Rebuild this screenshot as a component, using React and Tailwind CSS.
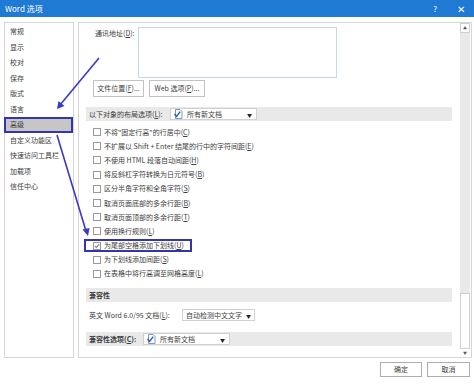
import React from "react";

const U = ({ c }) => <span className="underline">{c}</span>;

function Check({ checked }) {
  return (
    <span className="w-[8px] h-[8px] border border-[#9a9a9a] bg-white flex items-center justify-center shrink-0">
      {checked && (
        <svg width="6" height="6" viewBox="0 0 6 6">
          <path d="M0.8 3 L2.4 4.6 L5.2 1.2" stroke="#8a8a8a" strokeWidth="1.1" fill="none" />
        </svg>
      )}
    </span>
  );
}

function DocIcon() {
  return (
    <svg width="9" height="10" viewBox="0 0 9 10" className="shrink-0">
      <path d="M1.5 0.5 H6 L8 2.5 V9.5 H1.5 Z" fill="#fff" stroke="#5a7fb5" strokeWidth="0.8" />
      <path d="M0.5 5 L2.6 7.4 L6.2 2.6" stroke="#2a5aa8" strokeWidth="1.4" fill="none" />
    </svg>
  );
}

function Arrow() {
  return <span className="ml-auto text-[5px] leading-none text-[#222]">▼</span>;
}

function Dropdown({ w, icon, text }) {
  return (
    <div className={`${w} h-[12px] bg-white border border-[#d0d0d0] flex items-center pl-[3px] pr-[4px] gap-[4px] whitespace-nowrap`}>
      {icon && <DocIcon />}
      <span className="whitespace-nowrap">{text}</span>
      <Arrow />
    </div>
  );
}

function Row({ children, checked }) {
  return (
    <div className="h-[14.2px] flex items-center pl-[7px]">
      <Check checked={checked} />
      <span className="ml-[3px] whitespace-nowrap">{children}</span>
    </div>
  );
}

export default function App() {
  const left = ["常规", "显示", "校对", "保存", "版式", "语言", "高级", "自定义功能区", "快速访问工具栏", "加载项", "信任中心"];
  return (
    <div className="w-[474px] h-[384px] relative bg-white overflow-hidden text-[7px] leading-none text-[#404040] font-['Noto_Sans_CJK_SC','Noto_Sans',sans-serif]">
      {/* title bar */}
      <div className="h-[17px] bg-[#1f7ad3] text-white flex items-center pl-[5px] pr-[9px]">
        <span className="text-[8px]">Word 选项</span>
        <span className="ml-auto text-[8px] mr-[20px]">?</span>
        <span className="text-[10px]">✕</span>
      </div>

      <div className="flex gap-[4px] pl-[4px] pr-[2px] pt-[5px] h-[341px]">
        {/* left nav */}
        <div className="w-[70px] h-full border border-[#d6d6d6] pt-[1px]">
          {left.map((t) =>
            t === "高级" ? (
              <div key={t} className="h-[15.5px] flex items-center">
                <div className="-ml-[1px] w-[71px] h-[16px] bg-[#c6c6c6] border-2 border-[#3434ae] flex items-center pl-[4px]">{t}</div>
              </div>
            ) : (
              <div key={t} className="h-[15.5px] flex items-center pl-[5px]">{t}</div>
            )
          )}
        </div>

        {/* right panel */}
        <div className="flex-1 h-full border border-[#d6d6d6] flex">
          <div className="flex-1 pl-[7px] pr-[8px] pt-[4px] flex flex-col">
            <div className="flex pl-[9px]">
              <span className="mt-[3px] w-[43px]">通讯地址(<U c="D" />):</span>
              <div className="w-[199px] h-[51px] border border-[#c9d6e3] bg-white" />
            </div>
            <div className="flex gap-[5px] pl-[7px] mt-[2px]">
              <div className="w-[51px] h-[17px] border border-[#c2c2c2] flex items-center justify-center">文件位置(<U c="F" />)...</div>
              <div className="w-[56px] h-[17px] border border-[#c2c2c2] flex items-center justify-center">Web 选项(<U c="P" />)...</div>
            </div>

            <div className="mt-[10px] h-[14px] bg-[#e9e9e9] flex items-center pl-[3px]">
              <span className="w-[81px]">以下对象的布局选项(<U c="L" />):</span>
              <Dropdown w="w-[87px]" icon text="所有新文档" />
            </div>

            <div className="mt-[4px]">
              <Row>不将"固定行高"的行居中(<U c="C" />)</Row>
              <Row>不扩展以 Shift + Enter 结尾的行中的字符间距(<U c="E" />)</Row>
              <Row>不使用 HTML 段落自动间距(<U c="H" />)</Row>
              <Row>将反斜杠字符转换为日元符号(<U c="B" />)</Row>
              <Row>区分半角字符和全角字符(<U c="S" />)</Row>
              <Row>取消页面底部的多余行距(<U c="B" />)</Row>
              <Row>取消页面顶部的多余行距(<U c="T" />)</Row>
              <Row>使用换行规则(<U c="L" />)</Row>
              <div className="h-[14.2px] flex items-center">
                <div className="-ml-[2px] w-[108px] h-[13px] border-2 border-[#3434ae] flex items-center pl-[7px]">
                  <Check checked />
                  <span className="ml-[3px] whitespace-nowrap">为尾部空格添加下划线(<U c="U" />)</span>
                </div>
              </div>
              <Row>为下划线添加间距(<U c="S" />)</Row>
              <Row>在表格中将行高调至网格高度(<U c="L" />)</Row>
            </div>

            <div className="mt-[7px] h-[14px] bg-[#e9e9e9] flex items-center pl-[3px] font-semibold">兼容性</div>

            <div className="mt-[6px] h-[14px] flex items-center pl-[3px]">
              <span className="w-[93px]">英文 Word 6.0/95 文档(<U c="L" />):</span>
              <Dropdown w="w-[73px]" text="自动检测中文文字" />
            </div>

            <div className="mt-[10px] h-[14px] bg-[#e9e9e9] flex items-center pl-[3px]">
              <span className="w-[54px] font-semibold">兼容性选项(<U c="C" />):</span>
              <Dropdown w="w-[87px]" icon text="所有新文档" />
            </div>
          </div>

          {/* scrollbar */}
          <div className="w-[10px] mr-[1px] bg-[#e9e9e9] flex flex-col">
            <div className="h-[10px] bg-white border border-[#cfcfcf] flex items-center justify-center text-[4px] text-[#555]">▲</div>
            <div className="flex-1" />
            <div className="h-[56px] bg-white border border-[#cfcfcf]" />
            <div className="h-[8px] bg-white flex items-center justify-center text-[4px] text-[#555]">▼</div>
          </div>
        </div>
      </div>

      {/* bottom buttons */}
      <div className="flex justify-end gap-[5px] pr-[4px] mt-[4px]">
        <div className="w-[42px] h-[15px] border border-[#adadad] flex items-center justify-center">确定</div>
        <div className="w-[43px] h-[15px] border border-[#adadad] flex items-center justify-center">取消</div>
      </div>

      {/* annotation arrows */}
      <svg className="absolute left-0 top-0 pointer-events-none" width="474" height="384">
        <line x1="99" y1="58" x2="60" y2="105" stroke="#3a3ac4" strokeWidth="1.6" />
        <path d="M57 109 L58.5 101 L64.5 106 Z" fill="#3a3ac4" />
        <line x1="57" y1="135" x2="86" y2="231" stroke="#3a3ac4" strokeWidth="1.6" />
        <path d="M88 236 L82.5 229.5 L89.5 228 Z" fill="#3a3ac4" />
      </svg>
    </div>
  );
}
